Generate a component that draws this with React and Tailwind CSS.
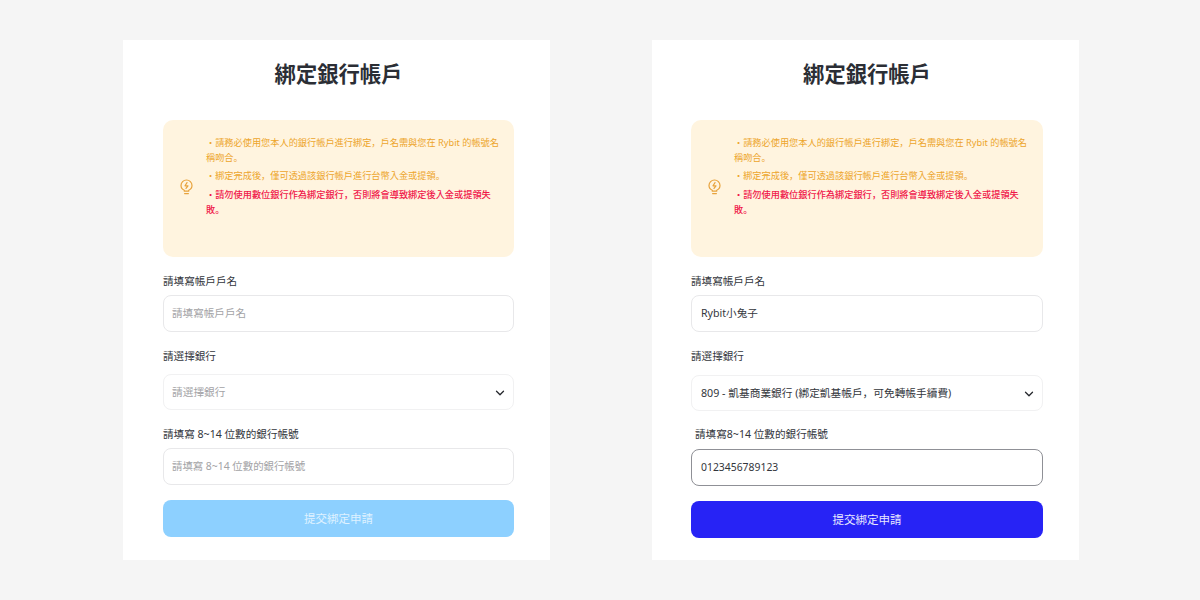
import React from 'react';
import { ChevronDown } from 'lucide-react';

const FONT = "font-['Noto_Sans','Noto_Sans_CJK_JP',sans-serif]";

const BulbIcon = () => (
  <svg width="13" height="16" viewBox="0 0 13 16" fill="none" stroke="#e8a33d" strokeWidth="1.2" strokeLinecap="round" strokeLinejoin="round" className="shrink-0">
    <path d="M4.3 11.2C2.4 10.4 1 8.6 1 6.5a5.5 5.5 0 0 1 11 0c0 2.1-1.4 3.9-3.3 4.7v1H4.3z" />
    <path d="M4.6 14.6h3.8" />
    <path d="M7 3.6 5 6.8h3L6 9.4" />
  </svg>
);

const Field = ({ label, labelClass = '', className = '', children }) => (
  <div className={className}>
    <div className={`text-[10.6px] leading-4 text-[#33363c] ${labelClass}`}>{label}</div>
    {children}
  </div>
);

const BindCard = ({ filled }) => (
  <div className={`w-[427px] h-[520px] bg-white pt-[20px] shrink-0 ${filled ? 'pl-[39px] pr-[36px]' : 'pl-10 pr-9'}`}>
    <h2 className="text-[21.3px] leading-7 font-bold text-center text-[#2b2e35]">綁定銀行帳戶</h2>

    {/* 注意事項 */}
    <div className="mt-[32px] h-[137px] rounded-[10px] bg-[#fff4df] flex pl-[17px] pr-[10px] pt-[15px]">
      <div className="w-[26px] shrink-0 flex items-center h-[104px]">
        <BulbIcon />
      </div>
      <div className="text-[9.2px] leading-[15px] text-[#eda52b]">
        <p>・請務必使用您本人的銀行帳戶進行綁定，戶名需與您在 Rybit 的帳號名<br />稱吻合。</p>
        <p className="mt-[3px]">・綁定完成後，僅可透過該銀行帳戶進行台幣入金或提領。</p>
        <p className="mt-[4px] font-medium text-[#f0174a]">・請勿使用數位銀行作為綁定銀行，否則將會導致綁定後入金或提領失<br />敗。</p>
      </div>
    </div>

    <Field label="請填寫帳戶戶名" className="mt-[16px]">
      <div className={`mt-[6px] h-[37px] pt-px rounded-lg border border-[#e8e8ea] flex items-center text-[10.6px] ${filled ? 'pl-[9px] text-[#33363c]' : 'pl-[8px] text-[#a3a3a6]'}`}>
        {filled ? 'Rybit小兔子' : '請填寫帳戶戶名'}
      </div>
    </Field>

    <Field label="請選擇銀行" className="mt-[16px]">
      <div className={`h-[36px] pt-px rounded-lg border border-[#f1f1f2] flex items-center justify-between pr-[6px] text-[10.7px] ${filled ? 'mt-[11px] pl-[9px] text-[#33363c]' : 'mt-[10px] pl-[8px] text-[#a3a3a6]'}`}>
        <span>{filled ? '809 - 凱基商業銀行 (綁定凱基帳戶，可免轉帳手續費)' : '請選擇銀行'}</span>
        <ChevronDown size={14} strokeWidth={2.2} className="text-[#26282d]" />
      </div>
    </Field>

    <Field label={filled ? '請填寫8~14 位數的銀行帳號' : '請填寫 8~14 位數的銀行帳號'} labelClass={filled ? 'pl-[4px]' : ''} className={filled ? 'mt-[15px]' : 'mt-[16px]'}>
      <div className={`h-[37px] pt-px rounded-lg border flex items-center text-[10.4px] ${filled ? 'mt-[7px] border-[#8f9096] pl-[9px] text-[#33363c]' : 'mt-[6px] border-[#e8e8ea] pl-[8px] text-[#a3a3a6]'}`}>
        {filled ? '0123456789123' : '請填寫 8~14 位數的銀行帳號'}
      </div>
    </Field>

    <button type="button" className={`mt-[15px] w-full h-[37px] rounded-lg text-[11.5px] ${filled ? 'bg-[#2723f5] text-[#e8e8ff]' : 'bg-[#8dd0ff] text-[#dff2ff]'}`}>
      提交綁定申請
    </button>
  </div>
);

export default function App() {
  return (
    <div className={`w-[1200px] h-[600px] bg-[#f5f5f5] flex gap-[102px] pl-[123px] pt-[40px] overflow-hidden ${FONT}`}>
      <BindCard />
      <BindCard filled />
    </div>
  );
}
